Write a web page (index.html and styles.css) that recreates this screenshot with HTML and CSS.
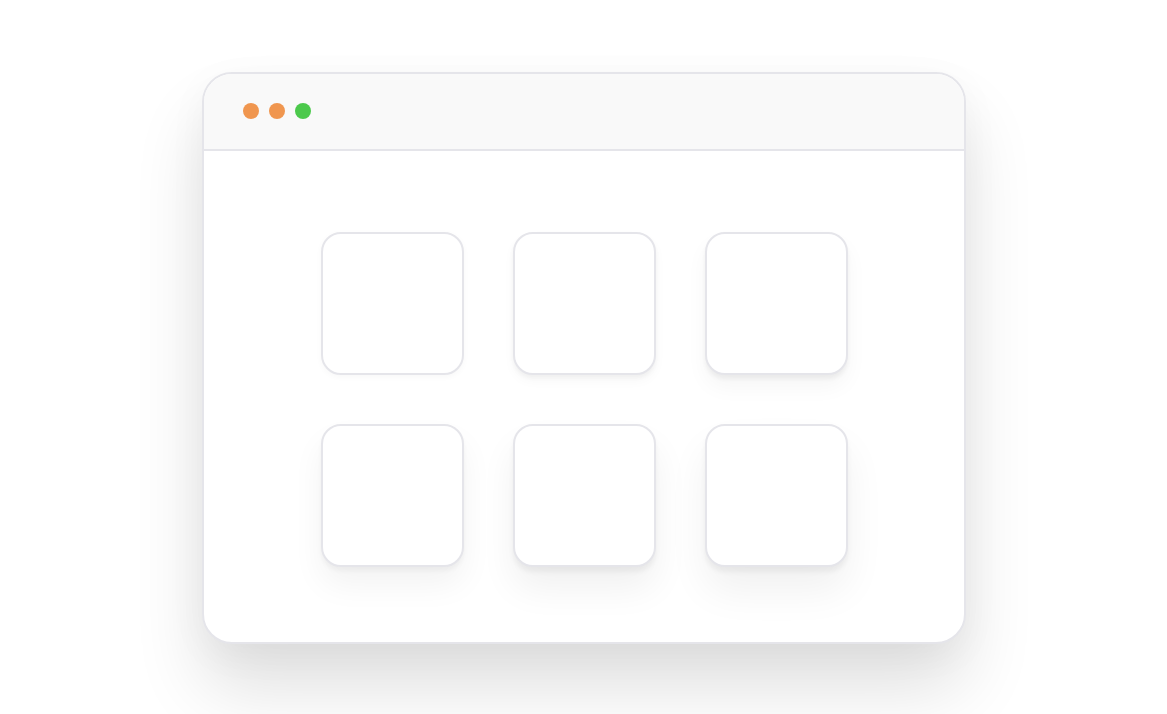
FILE: index.html
```html
<!DOCTYPE html>
<html lang="en">
<head>
<meta charset="utf-8">
<title>Window</title>
<link rel="stylesheet" href="styles.css">
</head>
<body>
<div class="stage">
  <div class="window">
    <div class="titlebar">
      <span class="dot dot-orange"></span>
      <span class="dot dot-orange"></span>
      <span class="dot dot-green"></span>
    </div>
    <div class="content">
      <div class="grid">
        <div class="card c1"></div>
        <div class="card c2"></div>
        <div class="card c3"></div>
        <div class="card c4"></div>
        <div class="card c5"></div>
        <div class="card c6"></div>
      </div>
    </div>
  </div>
</div>
</body>
</html>
```
FILE: styles.css
```css
html, body {
  margin: 0;
  padding: 0;
  background: #ffffff;
  font-family: "Liberation Sans", Arial, sans-serif;
}
.stage {
  width: 1167px;
  height: 714px;
  display: flex;
  align-items: flex-start;
  justify-content: center;
  padding-top: 72px;
  box-sizing: border-box;
  overflow: hidden;
}
.window {
  width: 764px;
  height: 572px;
  box-sizing: border-box;
  border: 2px solid #e5e5ea;
  border-radius: 30px;
  background: #ffffff;
  overflow: hidden;
  box-shadow: 0 45px 70px rgba(0, 0, 0, 0.12), 0 10px 40px rgba(0, 0, 0, 0.04);
  display: flex;
  flex-direction: column;
}
.titlebar {
  height: 74px;
  flex: none;
  background: #f9f9f9;
  border-bottom: 2px solid #e5e5ea;
  display: flex;
  align-items: center;
  gap: 10px;
  padding-left: 39px;
  padding-bottom: 1px;
  box-sizing: content-box;
}
.dot {
  width: 16px;
  height: 16px;
  border-radius: 50%;
  display: block;
}
.dot-orange { background: #f0964f; }
.dot-green { background: #4cc94c; }
.content {
  flex: 1;
  display: flex;
  justify-content: center;
  padding-top: 81px;
  padding-left: 2px;
}
.grid {
  display: grid;
  grid-template-columns: repeat(3, 143px);
  grid-auto-rows: 143px;
  column-gap: 49px;
  row-gap: 49px;
}
.card {
  box-sizing: border-box;
  border: 2px solid #e5e5ea;
  border-radius: 20px;
  background: #ffffff;
}
.c1 { box-shadow: 0 2px 6px rgba(0, 0, 0, 0.03); }
.c2 { box-shadow: 0 3px 4px rgba(0, 0, 0, 0.04), 0 6px 12px rgba(0, 0, 0, 0.03); }
.c3 { box-shadow: 0 4px 4px rgba(0, 0, 0, 0.05), 0 12px 22px rgba(0, 0, 0, 0.04); }
.c4 { box-shadow: 0 4px 4px rgba(0, 0, 0, 0.04), 0 18px 32px rgba(0, 0, 0, 0.05); }
.c5 { box-shadow: 0 5px 5px rgba(0, 0, 0, 0.05), 0 22px 36px rgba(0, 0, 0, 0.06); }
.c6 { box-shadow: 0 5px 5px rgba(0, 0, 0, 0.05), 0 24px 40px rgba(0, 0, 0, 0.06); }
```
